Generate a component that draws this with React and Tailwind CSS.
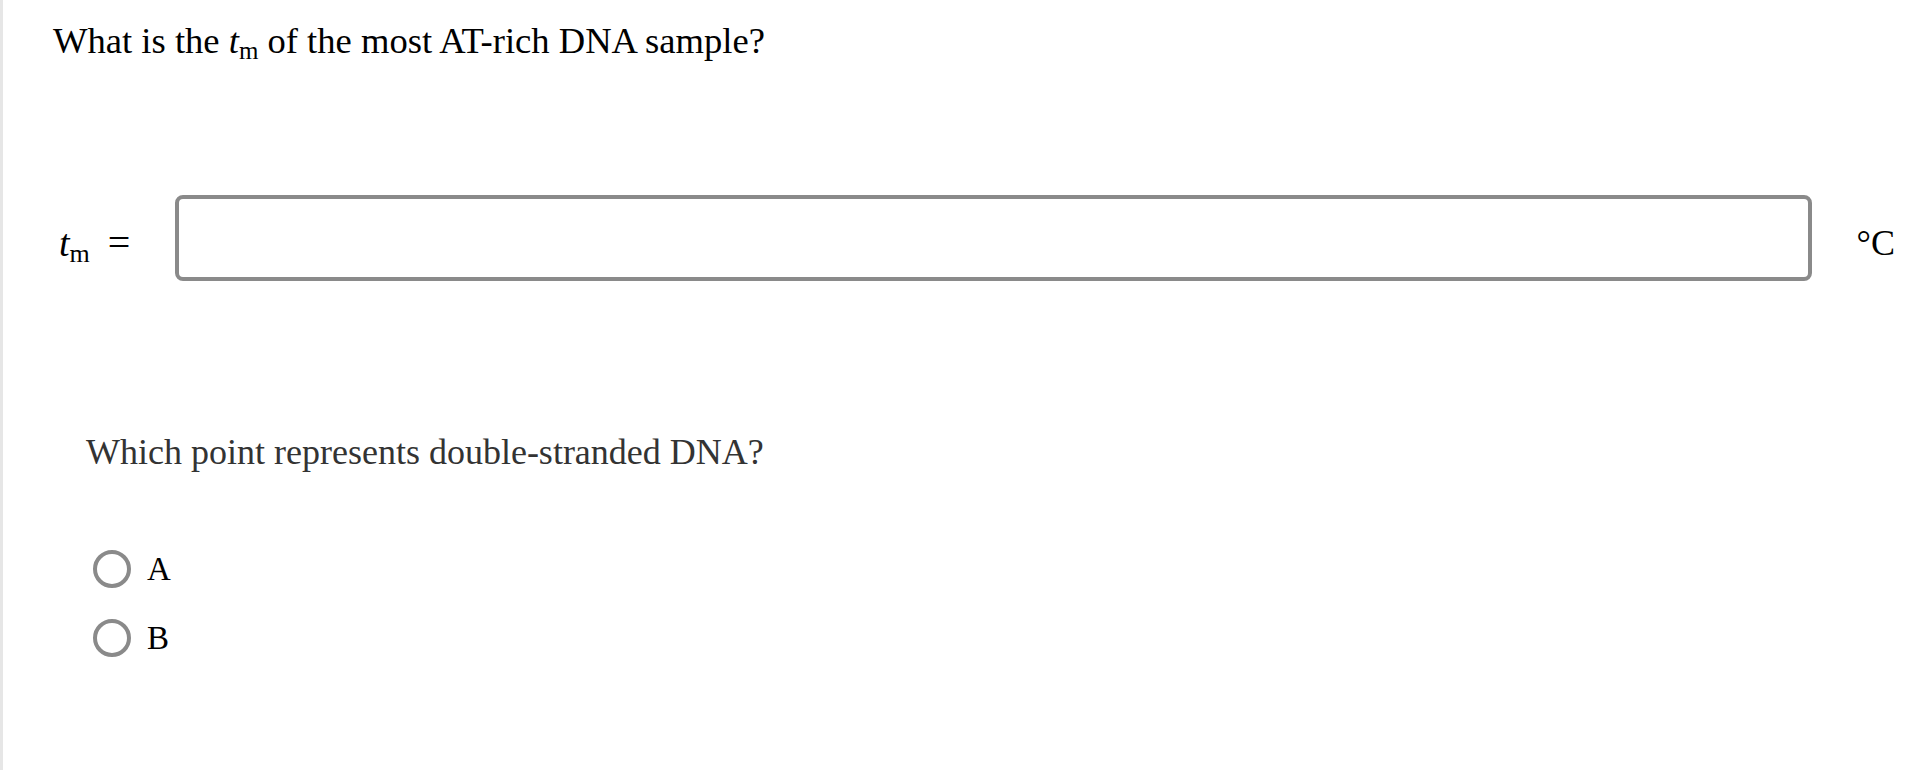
import React from "react";

function Tm({ sub = "text-[25px]" }) {
  return (
    <span className="whitespace-nowrap">
      <span className="italic">t</span>
      <span className={`relative top-[6px] leading-none ${sub}`}>m</span>
    </span>
  );
}

function Radio({ label }) {
  return (
    <label className="flex h-[46px] items-center">
      <span className="h-[38px] w-[38px] shrink-0 rounded-full border-[4px] border-[#8a8a8a] bg-white" />
      <span className="ml-[16px] text-[33px] leading-[40px] text-black">{label}</span>
    </label>
  );
}

export default function App() {
  return (
    <div
      className="min-h-screen border-l-[3px] border-[#e6e6e6] bg-white pl-[50px] pr-[22px] pt-[21px]"
      style={{ fontFamily: '"Liberation Serif", "Times New Roman", serif' }}
    >
      <p className="text-[36.6px] leading-[40px] text-black">
        What is the <Tm /> of the most AT-rich DNA sample?
      </p>

      <div className="mt-[134px] flex h-[86px] items-center">
        <div className="w-[122px] shrink-0 pt-[10px] text-[38px] leading-[40px] text-black">
          <span className="ml-[6px]">
            <Tm sub="text-[26px]" />
          </span>
          <span className="ml-[18px] text-[40px]">=</span>
        </div>
        <div className="h-[86px] flex-1 rounded-[8px] border-[4px] border-[#8a8a8a] bg-white" />
        <div className="ml-[45px] shrink-0 pt-[10px] text-[36px] leading-[40px] text-black">°C</div>
      </div>

      <p className="ml-[33px] mt-[151px] text-[36px] leading-[40px] text-[#333333]">
        Which point represents double-stranded DNA?
      </p>

      <div className="ml-[40px] mt-[74px] flex flex-col gap-[23px]">
        <Radio label="A" />
        <Radio label="B" />
      </div>
    </div>
  );
}
